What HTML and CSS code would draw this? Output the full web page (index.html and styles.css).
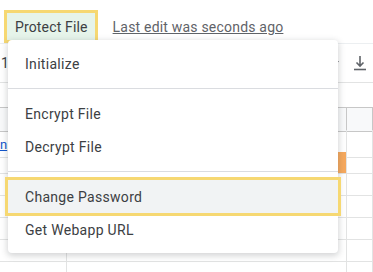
FILE: index.html
```
<!DOCTYPE html>
<html lang="en">
<head>
  <meta charset="UTF-8">
  <title>Protect File</title>
  <link rel="stylesheet" href="styles.css">
</head>
<body>

<div class="topbar">
  <button class="protect-btn">Protect File</button>
  <a class="last-edit" href="#">Last edit was seconds ago</a>
</div>

<div class="sheet">
  <div class="toolbar">
    <span class="zoom">1</span>
    <span class="spacer"></span>
    <span class="caret"></span>
    <svg class="download" width="14" height="16" viewBox="0 0 14 16">
      <path d="M7 1v10M3.5 7.5L7 11l3.5-3.5" fill="none" stroke="#5f6368" stroke-width="1.6"/>
      <path d="M1 14.5h12" stroke="#5f6368" stroke-width="1.6"/>
    </svg>
  </div>
  <div class="formula"></div>
  <div class="grid">
    <div class="cell head"></div><div class="cell head"></div><div class="cell head"></div>
    <div class="cell tall"><a href="#">n</a></div><div class="cell tall"></div><div class="cell tall"></div>
    <div class="cell"></div><div class="cell orange"></div><div class="cell"></div>
    <div class="cell"></div><div class="cell"></div><div class="cell"></div>
    <div class="cell"></div><div class="cell"></div><div class="cell"></div>
    <div class="cell"></div><div class="cell"></div><div class="cell"></div>
    <div class="cell"></div><div class="cell"></div><div class="cell"></div>
    <div class="cell"></div><div class="cell"></div><div class="cell"></div>
  </div>
</div>

<div class="menu">
  <div class="item">Initialize</div>
  <div class="divider"></div>
  <div class="item">Encrypt File</div>
  <div class="item">Decrypt File</div>
  <div class="divider"></div>
  <div class="item active">Change Password</div>
  <div class="item">Get Webapp URL</div>
</div>

</body>
</html>
```

FILE: styles.css
```
* {
  box-sizing: border-box;
  margin: 0;
  padding: 0;
}
body {
  width: 373px;
  height: 272px;
  overflow: hidden;
  position: relative;
  background: #fff;
  font-family: Roboto, 'Liberation Sans', sans-serif;
  font-size: 14px;
  color: #3c4043;
}
.topbar {
  height: 43px;
  padding: 10px 0 0 4px;
  display: flex;
  align-items: center;
}
.protect-btn {
  height: 33px;
  padding: 0 7px 0 8px;
  border: 3px solid #f6d872;
  background: #e6f4ea;
  font-family: inherit;
  font-size: 14px;
  letter-spacing: 0.15px;
  color: #3c4043;
}
.last-edit {
  margin-left: 15px;
  color: #5f6368;
  letter-spacing: 0.2px;
  text-decoration: underline;
}
.toolbar {
  height: 40px;
  border-top: 1px solid #eceff1;
  border-bottom: 1px solid #e2e3e3;
  display: flex;
  align-items: center;
  padding: 0 6px 0 1px;
}
.zoom {
  color: #3c4043;
}
.spacer {
  flex: 1;
}
.caret {
  width: 0;
  height: 0;
  border-left: 3.5px solid transparent;
  border-right: 3.5px solid transparent;
  border-top: 4px solid #5f6368;
  margin-right: 14px;
}
.download {
  display: block;
}
.formula {
  height: 25px;
  border-bottom: 1px solid #c7c7c7;
}
.grid {
  display: grid;
  grid-template-columns: 67px 280px 1fr;
  grid-auto-rows: 22px;
}
.cell {
  border-right: 1px solid #e2e3e3;
  border-bottom: 1px solid #e2e3e3;
  overflow: hidden;
  white-space: nowrap;
  font-size: 13px;
  padding: 2px 0 0 0;
}
.cell.head {
  height: 24px;
  background: #f8f9fa;
  border-color: #c7c7c7;
}
.cell.tall {
  height: 28px;
  padding-top: 7px;
}
.cell a {
  color: #1155cc;
}
.cell.orange {
  background: #f6a95e;
}
.menu {
  position: absolute;
  left: 8px;
  top: 40px;
  width: 330px;
  padding: 7px 0;
  background: #fff;
  border-radius: 4px;
  box-shadow: 0 2px 6px 1px rgba(60, 64, 67, 0.22);
}
.item {
  height: 33px;
  padding-left: 17px;
  display: flex;
  align-items: center;
  color: #3c4043;
  letter-spacing: 0.3px;
}
.item.active {
  background: #f1f3f4;
  outline: 3px solid #f6d872;
  outline-offset: 0;
}
.divider {
  height: 1px;
  margin: 8px 0;
  background: #dadce0;
}
```
